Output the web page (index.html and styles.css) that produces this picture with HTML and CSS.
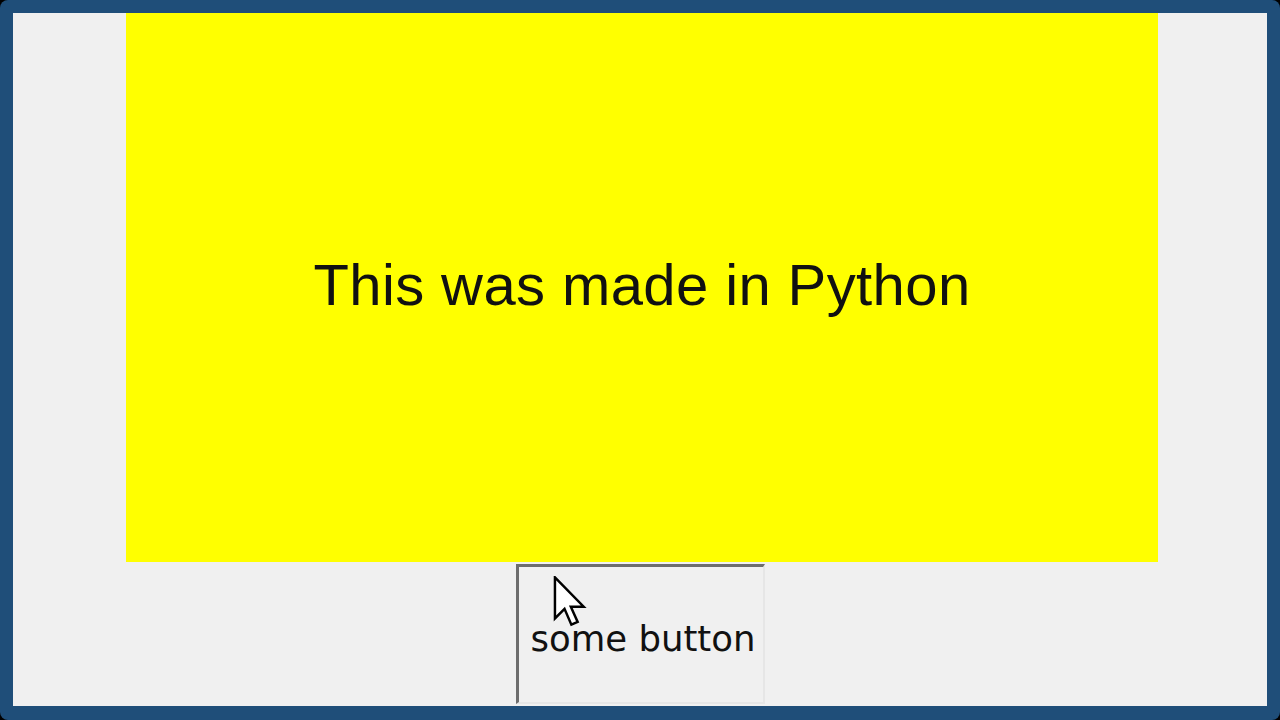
FILE: index.html
```html
<!DOCTYPE html>
<html lang="en">
<head>
  <meta charset="UTF-8">
  <title>This was made in Python</title>
  <link rel="stylesheet" href="styles.css">
</head>
<body>
  <div class="frame">
    <div class="window">
      <div class="label">This was made in Python</div>
      <div class="button-wrap">
        <button class="tk-button">some button</button>
        <!-- mouse pointer over the button -->
        <svg class="cursor" width="36" height="52" viewBox="0 0 12 19">
          <path d="M0.5 0.5 L0.5 15.5 L4 12 L6.5 17.8 L8.8 16.8 L6.3 11.2 L11 11.2 Z" fill="#fff" stroke="#000" stroke-width="0.9" stroke-linejoin="miter"/>
        </svg>
      </div>
    </div>
  </div>
</body>
</html>
```

FILE: styles.css
```css
html, body {
  margin: 0;
  padding: 0;
  width: 1280px;
  height: 720px;
  overflow: hidden;
  background: #000;
}

/* Синяя рамка вокруг окна */
.frame {
  box-sizing: border-box;
  width: 1280px;
  height: 720px;
  padding: 13px 13px 14px 13px;
  background: #1f4e79;
  border-radius: 8px;
}

.window {
  height: 100%;
  background: #f0f0f0;
  display: flex;
  flex-direction: column;
  align-items: center;
}

/* Жёлтая надпись */
.label {
  box-sizing: border-box;
  width: 1032px;
  height: 549px;
  margin-left: 4px;
  padding-bottom: 6px;
  background: #ffff00;
  display: flex;
  align-items: center;
  justify-content: center;
  font-family: "Liberation Sans", Arial, sans-serif;
  font-size: 58px;
  letter-spacing: 0.4px;
  color: #111;
}

.button-wrap {
  position: relative;
  margin-top: 2px;
  margin-left: 1px;
}

.tk-button {
  box-sizing: border-box;
  width: 249px;
  height: 140px;
  padding: 8px 0 0 4px;
  background: #f0f0f0;
  border-style: solid;
  border-width: 3px 2px 2px 3px;
  border-color: #6d6d6d #e6e6e6 #e6e6e6 #6d6d6d;
  font-family: "DejaVu Sans", Verdana, sans-serif;
  font-size: 35.5px;
  color: #111;
}

.cursor {
  position: absolute;
  left: 36px;
  top: 12px;
}
```
